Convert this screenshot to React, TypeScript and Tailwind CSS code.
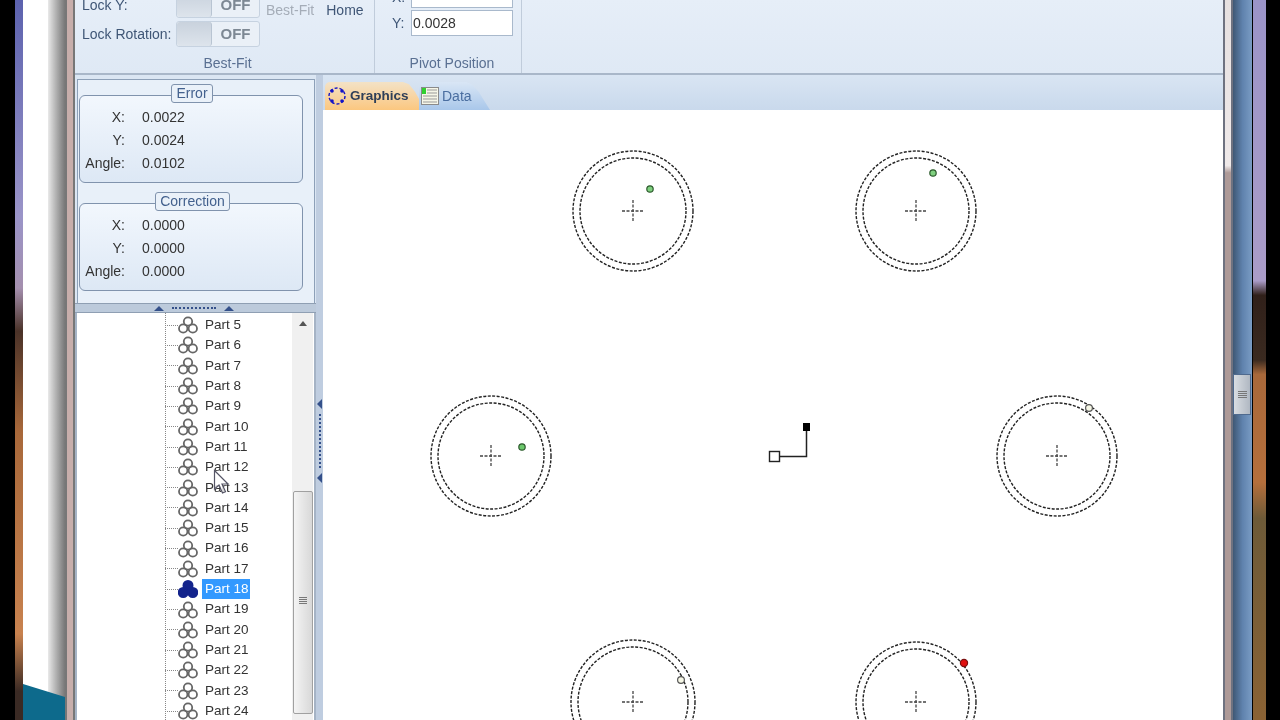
const FONT = "font-['Liberation_Sans',Arial,sans-serif]";

const parts = Array.from({ length: 20 }, (_, i) => i + 5);

const gauges = [
  { cx: 633, cy: 211, outer: 60, inner: 53 },
  { cx: 916, cy: 211, outer: 60, inner: 53 },
  { cx: 491, cy: 456, outer: 60, inner: 53 },
  { cx: 1057, cy: 456, outer: 60, inner: 53 },
  { cx: 633, cy: 702, outer: 62, inner: 55 },
  { cx: 916, cy: 702, outer: 60, inner: 53 },
];

const dots = [
  { x: 650, y: 189, fill: '#7fd07f', stroke: '#2d5a2d', r: 3.2 },
  { x: 933, y: 173, fill: '#7fd07f', stroke: '#2d5a2d', r: 3.2 },
  { x: 522, y: 447, fill: '#6cc86c', stroke: '#2d5a2d', r: 3.2 },
  { x: 1089, y: 408, fill: '#f6f7e6', stroke: '#555', r: 3.4 },
  { x: 681, y: 680, fill: '#f6f7e6', stroke: '#555', r: 3.4 },
  { x: 964, y: 663, fill: '#e01010', stroke: '#7a1010', r: 3.6 },
];

const Toggle = () => (
  <div className="flex h-[26px] w-[84px] rounded-[3px] border border-[#c6d2e0] bg-[#eaf0f7]">
    <div className="w-[35px] rounded-[3px] border-r border-[#b8c4d2] bg-gradient-to-b from-[#c9d2dd] to-[#dde4ec]" />
    <div className="flex flex-1 items-center justify-center text-[15px] font-bold text-[#7d8894]">OFF</div>
  </div>
);

const LockRow = ({ label }: { label: string }) => (
  <div className="flex items-center">
    <span className="w-[94px] text-[14px] text-[#3f5676]">{label}</span>
    <Toggle />
  </div>
);

const Ribbon = () => (
  <div className="flex h-[75px] shrink-0 overflow-hidden border-b-2 border-[#a9b7c9] bg-gradient-to-b from-[#e6eef8] to-[#dfe9f5]">
    <div className="flex w-[300px] flex-col border-r border-[#c0ccdb]">
      <div className="flex min-h-0 flex-1 flex-col justify-end pb-[6px] pl-[7px]">
        <div className="flex items-start">
          <div className="flex flex-col gap-[3px]">
            <LockRow label="Lock Y:" />
            <LockRow label="Lock Rotation:" />
          </div>
          <div className="ml-[6px] mt-[8px] flex gap-[12px] text-[14px]">
            <span className="text-[#a5adb8]">Best-Fit</span>
            <span className="text-[#3f5676]">Home</span>
          </div>
        </div>
      </div>
      <div className="flex h-[20px] items-center justify-center pl-[6px] text-[14px] text-[#5a7092]">Best-Fit</div>
    </div>
    <div className="flex w-[147px] flex-col border-r border-[#c0ccdb]">
      <div className="flex min-h-0 flex-1 flex-col justify-end gap-[2px] pb-[17px] pl-[17px]">
        <div className="flex items-end gap-[7px]">
          <span className="w-[12px] text-[14px] text-[#3f5676]">X:</span>
          <div className="flex h-[26px] w-[102px] items-end border border-[#a9b9cc] bg-white px-[1px] pb-[3px] text-[14px] text-[#333]">0.0027</div>
        </div>
        <div className="flex items-center gap-[7px]">
          <span className="w-[12px] text-[14px] text-[#3f5676]">Y:</span>
          <div className="flex h-[26px] w-[102px] items-center border border-[#a9b9cc] bg-white px-[1px] text-[14px] text-[#333]">0.0028</div>
        </div>
      </div>
      <div className="flex h-[20px] items-center justify-center pl-[8px] text-[14px] text-[#5a7092]">Pivot Position</div>
    </div>
  </div>
);

const GroupBox = ({ title, values, legend }: { title: string; values: string[]; legend: string }) => (
  <div className="relative h-[88px] rounded-[6px] border border-[#8093ad] bg-gradient-to-b from-[#f2f7fd] to-[#dde8f5] pt-[10px]">
    <div className={`absolute -top-[12px] flex h-[19px] items-center justify-center rounded-[3px] border border-[#8093ad] bg-[#eaf1f9] text-[14px] text-[#43618e] ${legend}`}>
      {title}
    </div>
    <div className="flex flex-col">
      {['X:', 'Y:', 'Angle:'].map((label, i) => (
        <div key={label} className="flex h-[23px] items-center text-[14px] text-[#333]">
          <span className="w-[45px] text-right">{label}</span>
          <span className="ml-[17px]">{values[i]}</span>
        </div>
      ))}
    </div>
  </div>
);

const Rings = ({ on }: { on: boolean }) => (
  <svg width="20" height="18" viewBox="0 0 20 18" className="shrink-0">
    {[
      [10, 5.5],
      [5.2, 12.5],
      [14.8, 12.5],
    ].map(([cx, cy]) => (
      <circle
        key={`${cx}-${cy}`}
        cx={cx}
        cy={cy}
        r={on ? 4.6 : 4.2}
        fill={on ? '#14248c' : 'none'}
        stroke={on ? '#14248c' : '#666'}
        strokeWidth="1.8"
      />
    ))}
  </svg>
);

const Tree = () => (
  <div className="flex min-h-0 flex-1 overflow-hidden border-x-2 border-[#a5b3c5] bg-white">
    <div className="relative w-[216px] shrink-0 pl-[88px] pt-[2px]">
      <div className="absolute bottom-0 left-[88px] top-0 border-l border-dotted border-[#888]" />
      {parts.map((n) => (
        <div key={n} className="flex h-[20.32px] items-center">
          <div className="w-[13px] border-t border-dotted border-[#888]" />
          <Rings on={n === 18} />
          <span
            className={`ml-[4px] flex h-[20px] w-[48px] items-center whitespace-nowrap pl-[3px] text-[13.5px] ${
              n === 18 ? 'bg-[#3399ff] text-white' : 'text-[#333]'
            }`}
          >
            Part {n}
          </span>
        </div>
      ))}
    </div>
    <div className="-ml-[1px] flex w-[21px] shrink-0 flex-col items-center bg-[#f0f0f0]">
      <div className="mt-[8px] h-0 w-0 border-x-[4px] border-b-[5px] border-x-transparent border-b-[#555]" />
      <div className="mt-[165px] flex h-[223px] w-[20px] items-center justify-center rounded-[2px] border border-[#a0a0a0] bg-gradient-to-r from-[#f4f4f4] to-[#d8d8d8] pb-[4px]">
        <div className="flex flex-col gap-[1px]">
          <div className="h-px w-[8px] bg-[#777]" />
          <div className="h-px w-[8px] bg-[#777]" />
          <div className="h-px w-[8px] bg-[#777]" />
          <div className="h-px w-[8px] bg-[#777]" />
        </div>
      </div>
    </div>
  </div>
);

const LeftPanel = () => (
  <div className="flex w-[241px] shrink-0 flex-col overflow-hidden">
    <div className="ml-[2px] mr-[1px] mt-[4px] flex flex-col gap-[20px] border-x border-t border-[#8da0b8] bg-[#e8f0f9] pb-[12px] pl-[1px] pr-[11px] pt-[15px]">
      <GroupBox title="Error" values={['0.0022', '0.0024', '0.0102']} legend="left-[91px] w-[42px]" />
      <GroupBox title="Correction" values={['0.0000', '0.0000', '0.0000']} legend="left-[75px] w-[75px]" />
    </div>
    <div className="flex h-[10px] shrink-0 items-center justify-center gap-[8px] border-y border-[#8f9fb3] bg-[#bccadb] pr-[4px]">
      <div className="h-0 w-0 border-x-[5px] border-b-[5px] border-x-transparent border-b-[#34508a]" />
      <div className="w-[44px] border-t-2 border-dotted border-[#34508a]" />
      <div className="h-0 w-0 border-x-[5px] border-b-[5px] border-x-transparent border-b-[#34508a]" />
    </div>
    <Tree />
  </div>
);

const Splitter = () => (
  <div className="flex w-[7px] shrink-0 flex-col items-center bg-[#bfcde0] pt-[324px]">
    <div className="h-0 w-0 border-y-[5px] border-r-[5px] border-y-transparent border-r-[#34508a]" />
    <div className="my-[5px] h-[54px] border-l-2 border-dotted border-[#34508a]" />
    <div className="h-0 w-0 border-y-[5px] border-r-[5px] border-y-transparent border-r-[#34508a]" />
  </div>
);

const Tabs = () => (
  <div className="relative flex h-[35px] shrink-0 items-end bg-gradient-to-b from-[#d9e5f3] to-[#c9d9ec] pl-[2px]">
    <div className="flex h-[28px] w-[100px] items-center gap-[3px] rounded-tl-[5px] bg-gradient-to-b from-[#f3e2c6] to-[#fbc77f] pl-[2px] [clip-path:polygon(0_0,78%_0,84%_8%,90%_35%,100%_100%,0_100%)]">
      <svg width="20" height="20" viewBox="0 0 20 20" className="shrink-0">
        <circle cx="10" cy="10" r="8" fill="none" stroke="#1414c8" strokeWidth="1.4" strokeDasharray="3 2" />
        <circle cx="5" cy="5" r="1.8" fill="#1414c8" />
        <circle cx="15" cy="5" r="1.8" fill="#1414c8" />
        <circle cx="5" cy="15" r="1.8" fill="#1414c8" />
        <circle cx="15" cy="15" r="1.8" fill="#1414c8" />
      </svg>
      <span className="text-[13.5px] font-bold text-[#2f3f58]">Graphics</span>
    </div>
    <div className="-ml-[6px] flex h-[28px] w-[71px] items-center gap-[3px] bg-gradient-to-b from-[#d9e6f5] to-[#a9c7ea] pl-[2px] [clip-path:polygon(0_20%,4%_4%,9%_0,66%_0,74%_8%,84%_35%,100%_100%,0_100%)]">
      <svg width="18" height="18" viewBox="0 0 18 18" className="shrink-0">
        <rect x="0.5" y="0.5" width="17" height="17" fill="#f6f6e8" stroke="#8a8a8a" />
        <rect x="1" y="1" width="4" height="6" fill="#30d030" />
        <path d="M6 3h10M6 6h10M2 9h14M2 12h14M2 15h14" stroke="#999" />
      </svg>
      <span className="text-[14px] text-[#4a6ea0]">Data</span>
    </div>
  </div>
);

const Canvas = () => (
  <div className="min-h-0 flex-1 bg-white">
    <svg width="900" height="610" viewBox="323 110 900 610" className="block">
      {gauges.map((g) => (
        <g key={`${g.cx}-${g.cy}`} fill="none" stroke="#222" strokeWidth="1.4" strokeDasharray="3 1.5">
          <circle cx={g.cx} cy={g.cy} r={g.outer} />
          <circle cx={g.cx} cy={g.cy} r={g.inner} />
          <path d={`M${g.cx - 11} ${g.cy}H${g.cx + 11}M${g.cx} ${g.cy - 11}V${g.cy + 11}`} stroke="#444" strokeWidth="1.3" />
        </g>
      ))}
      {dots.map((d) => (
        <circle key={`${d.x}-${d.y}`} cx={d.x} cy={d.y} r={d.r} fill={d.fill} stroke={d.stroke} strokeWidth="1.2" />
      ))}
      <path d="M806.5 427V456.5H774" fill="none" stroke="#222" strokeWidth="1.5" />
      <rect x="803" y="423" width="7" height="8" fill="#000" />
      <rect x="769.5" y="451.5" width="10" height="10" fill="#fff" stroke="#222" strokeWidth="1.4" />
    </svg>
  </div>
);

const Cursor = () => (
  <svg width="18" height="26" viewBox="0 0 18 26" className="pointer-events-none absolute left-[213px] top-[469px]">
    <path d="M1.5 1.5V20L6 16l3.5 8 3-1.3L9 15h6z" fill="#fff" fillOpacity="0.75" stroke="#556" strokeWidth="1.2" />
  </svg>
);

export default function App() {
  return (
    <div className={`relative flex h-[720px] w-[1280px] overflow-hidden bg-black blur-[0.5px] ${FONT}`}>
      <div className="ml-[15px] w-[8px] shrink-0 bg-[linear-gradient(to_bottom,#5c62ae_0%,#9a94c8_30%,#a48fae_40%,#4a3228_46%,#a8683a_60%,#c8824f_88%,#3a2a24_96%)]" />
      <div className="relative w-[42px] shrink-0 bg-gradient-to-r from-white from-60% via-[#e8e8e8] to-[#777]">
        <div className="absolute inset-0 bg-[#0d6a8c] [clip-path:polygon(0_684px,100%_697px,100%_100%,0_100%)]" />
      </div>
      <div className="w-[10px] shrink-0 border-x-2 border-[#777] bg-[#c7aeab]" />
      <div className="flex w-[1148px] shrink-0 flex-col bg-[#dbe6f3]">
        <Ribbon />
        <div className="flex min-h-0 flex-1">
          <LeftPanel />
          <Splitter />
          <div className="flex min-w-0 flex-1 flex-col">
            <Tabs />
            <Canvas />
          </div>
        </div>
      </div>
      <div className="w-[10px] shrink-0 border-x-2 border-[#6e7280] bg-[linear-gradient(to_bottom,#e6e0e0_0%,#efe9e9_23%,#ae9a98_24%,#ae9a98_100%)]" />
      <div className="relative w-[19px] shrink-0 bg-gradient-to-r from-[#3f5875] via-[#5f82ad] to-[#7a9cc4]">
        <div className="absolute left-0 top-[374px] flex h-[41px] w-[18px] flex-col items-center justify-center gap-px border border-[#4f6a8e] bg-gradient-to-r from-[#d9dde2] to-[#b0b8c2]">
          <div className="h-px w-[9px] bg-[#777]" />
          <div className="h-px w-[9px] bg-[#777]" />
          <div className="h-px w-[9px] bg-[#777]" />
          <div className="h-px w-[9px] bg-[#777]" />
        </div>
      </div>
      <div className="ml-px w-[13px] shrink-0 bg-[linear-gradient(to_bottom,#9b94c8_0%,#aa9cc8_39%,#30201a_41%,#3a2a20_50%,#a8683a_52%,#b56f3c_67%,#6d5a38_72%,#8a6234_100%)]" />
      <Cursor />
    </div>
  );
}
